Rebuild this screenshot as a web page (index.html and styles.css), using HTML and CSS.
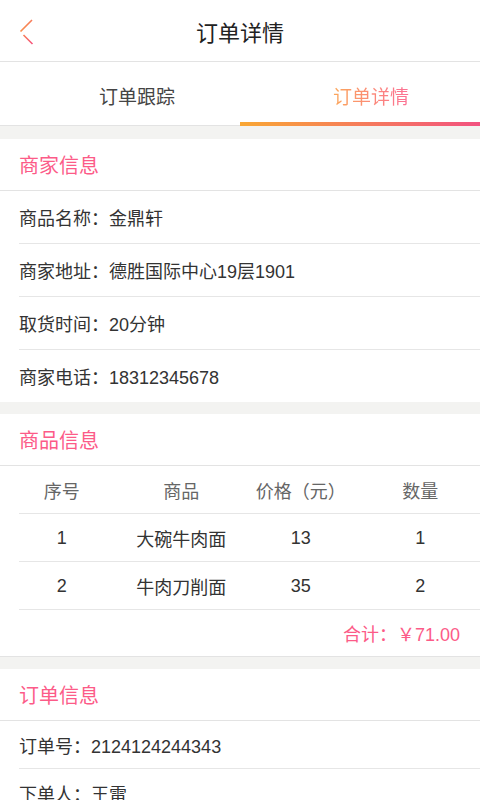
FILE: index.html
```html
<!DOCTYPE html>
<html lang="zh-CN">
	<head>
		<meta charset="UTF-8">
		<title>订单详情</title>
		<link rel="stylesheet" href="styles.css">
	</head>
	<body>
		<header class="top-bar">
			<span class="back-btn">
				<svg width="16" height="26" viewBox="0 0 16 26">
					<defs>
						<linearGradient id="back-grad" x1="0" y1="0" x2="1" y2="1">
							<stop offset="0" stop-color="#f9a23c"/>
							<stop offset="1" stop-color="#f5527d"/>
						</linearGradient>
					</defs>
					<path d="M13 1 L1.5 12.5 M4.5 16 L13.5 25" stroke="url(#back-grad)" stroke-width="1.6" fill="none"/>
				</svg>
			</span>
			<h1 class="top-title">订单详情</h1>
		</header>
		<nav class="tabs">
			<div class="tab tab-left">订单跟踪</div>
			<div class="tab tab-right tab-active"><span class="tab-text">订单详情</span></div>
		</nav>

		<div class="gap gap-first"></div>
		<section class="block">
			<h2 class="block-title">商家信息</h2>
			<div class="info-row">商品名称：金鼎轩</div>
			<div class="info-row">商家地址：德胜国际中心19层1901</div>
			<div class="info-row">取货时间：20分钟</div>
			<div class="info-row">商家电话：18312345678</div>
		</section>

		<div class="gap"></div>
		<section class="block block-bottom">
			<h2 class="block-title">商品信息</h2>
			<div class="goods-row goods-head">
				<span>序号</span><span>商品</span><span>价格（元）</span><span>数量</span>
			</div>
			<div class="goods-row">
				<span>1</span><span>大碗牛肉面</span><span>13</span><span>1</span>
			</div>
			<div class="goods-row">
				<span>2</span><span>牛肉刀削面</span><span>35</span><span>2</span>
			</div>
			<div class="goods-total">合计：￥71.00</div>
		</section>

		<div class="gap"></div>
		<section class="block">
			<h2 class="block-title">订单信息</h2>
			<div class="info-row info-row-short">订单号：2124124244343</div>
			<div class="info-row info-row-short">下单人：王雷</div>
		</section>
	</body>
</html>
```

FILE: styles.css
```css
*, *::before, *::after {
	box-sizing: border-box;
}

html, body {
	margin: 0;
	padding: 0;
}

body {
	background: #f3f3f1;
	color: #333;
	font-family: "Liberation Sans", "Noto Sans CJK TC", sans-serif;
	overflow: hidden;
}

.top-bar {
	position: relative;
	height: 62px;
	background: #fff;
	border-bottom: 1px solid #e3e3e3;
	display: flex;
	align-items: center;
	justify-content: center;
}

.back-btn {
	position: absolute;
	left: 19px;
	top: 19px;
	display: block;
	line-height: 0;
}

.top-title {
	margin: 0;
	font-size: 22px;
	font-weight: normal;
	color: #222;
}

.tabs {
	display: flex;
	height: 64px;
	background: #fff;
	border-bottom: 1px solid #e3e3e3;
}

.tab {
	position: relative;
	flex: 0 0 50%;
	display: flex;
	align-items: center;
	justify-content: center;
	font-size: 19px;
	color: #444;
	padding-top: 4px;
}

.tab-left {
	padding-left: 34px;
}

.tab-right {
	padding-left: 22px;
}

.tab-active::after {
	content: "";
	position: absolute;
	left: 0;
	right: 0;
	bottom: -1px;
	height: 4px;
	background: linear-gradient(to right, #f9a734, #f25280);
}

.tab-text {
	background: linear-gradient(to right, #fba75a, #fc6f95);
	-webkit-background-clip: text;
	background-clip: text;
	color: transparent;
}

.gap {
	height: 12px;
}

.gap-first {
	height: 13px;
}

.block {
	background: #fff;
}

.block-bottom {
	border-bottom: 1px solid #e3e3e3;
}

.block-title {
	margin: 0;
	height: 52px;
	padding-left: 19px;
	display: flex;
	align-items: center;
	font-size: 20px;
	font-weight: normal;
	color: #fc5b88;
	border-bottom: 1px solid #e3e3e3;
}

.info-row {
	height: 53px;
	margin-left: 19px;
	display: flex;
	align-items: center;
	font-size: 18px;
	color: #333;
	border-bottom: 1px solid #e6e6e6;
}

.info-row:last-child {
	height: 52px;
	border-bottom: 0;
}

.info-row-short {
	height: 48px;
}

.info-row-short:last-child {
	height: 48px;
}

.goods-row {
	height: 48px;
	padding-left: 2px;
	display: grid;
	grid-template-columns: repeat(4, 1fr);
	align-items: center;
	font-size: 18px;
	color: #333;
	background: linear-gradient(#e6e6e6, #e6e6e6) no-repeat 19px 100% / calc(100% - 19px) 1px;
}

.goods-row > span {
	text-align: center;
}

.goods-head {
	color: #666;
}

.goods-total {
	height: 46px;
	padding-right: 20px;
	display: flex;
	align-items: center;
	justify-content: flex-end;
	font-size: 18px;
	color: #fc5b88;
}
```
